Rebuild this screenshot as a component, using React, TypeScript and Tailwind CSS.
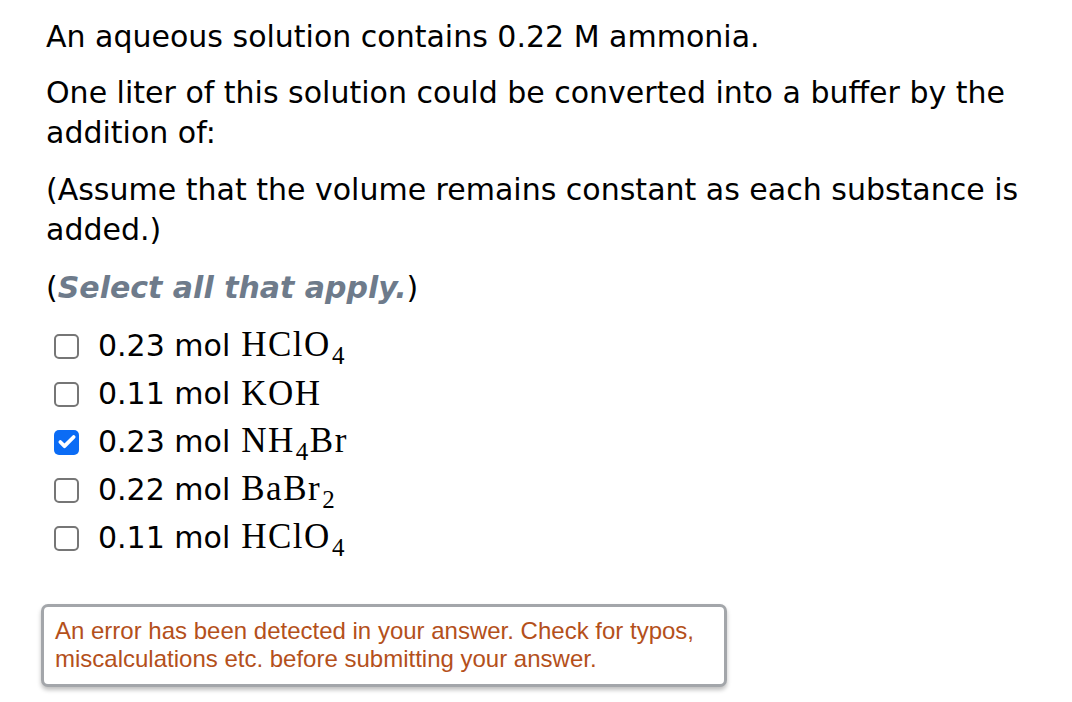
import { Check } from "lucide-react";

function Sub({ children }: { children: string }) {
  return <span className="relative top-[8px] ml-[1px] text-[25px]">{children}</span>;
}

const options = [
  { amount: "0.23", formula: <>HClO<Sub>4</Sub></>, checked: false },
  { amount: "0.11", formula: <>KOH</>, checked: false },
  { amount: "0.23", formula: <>NH<Sub>4</Sub>Br</>, checked: true },
  { amount: "0.22", formula: <>BaBr<Sub>2</Sub></>, checked: false },
  { amount: "0.11", formula: <>HClO<Sub>4</Sub></>, checked: false },
];

function Box({ checked }: { checked: boolean }) {
  if (checked) {
    return (
      <span className="flex h-[25px] w-[25px] items-center justify-center rounded-[5px] bg-[#0b6cf5]">
        <Check className="h-[20px] w-[20px] text-white" strokeWidth={4.5} />
      </span>
    );
  }
  return <span className="block h-[25px] w-[25px] rounded-[5px] border-2 border-[#767676] bg-white" />;
}

export default function App() {
  return (
    <div className="min-h-[702px] w-[1072px] bg-white pl-[46px] pt-[17px] text-black">
      <div className="font-['DejaVu_Sans',sans-serif] text-[30px] leading-[40px]">
        <p>An aqueous solution contains 0.22 M ammonia.</p>
        <p className="mt-[16px] w-[1010px]">One liter of this solution could be converted into a buffer by the addition of:</p>
        <p className="mt-[17px] w-[1010px]">(Assume that the volume remains constant as each substance is added.)</p>
        <p className="mt-[18px]">
          (<span className="font-bold italic text-[#6e7b8b]">Select all that apply.</span>)
        </p>
        <div className="mt-[14px] flex flex-col">
          {options.map((o, i) => (
            <label key={i} className="flex h-[48px] items-center">
              <span className="ml-[8px] mr-[19px]">
                <Box checked={o.checked} />
              </span>
              <span>{o.amount} mol</span>
              <span className="ml-[11px] font-['Liberation_Serif',serif] text-[35px] tracking-[1.5px]">{o.formula}</span>
            </label>
          ))}
        </div>
      </div>
      <div className="mt-[42px] -ml-[5px] w-[686px] rounded-[7px] border-[3px] border-[#a3a6aa] bg-white px-[11px] pb-[11px] pt-[10px] shadow-[0_3px_4px_rgba(0,0,0,0.25)]">
        <p className="font-['Liberation_Sans',sans-serif] text-[24px] leading-[28px] text-[#b4501b]">
          An error has been detected in your answer. Check for typos, miscalculations etc. before submitting your answer.
        </p>
      </div>
    </div>
  );
}
